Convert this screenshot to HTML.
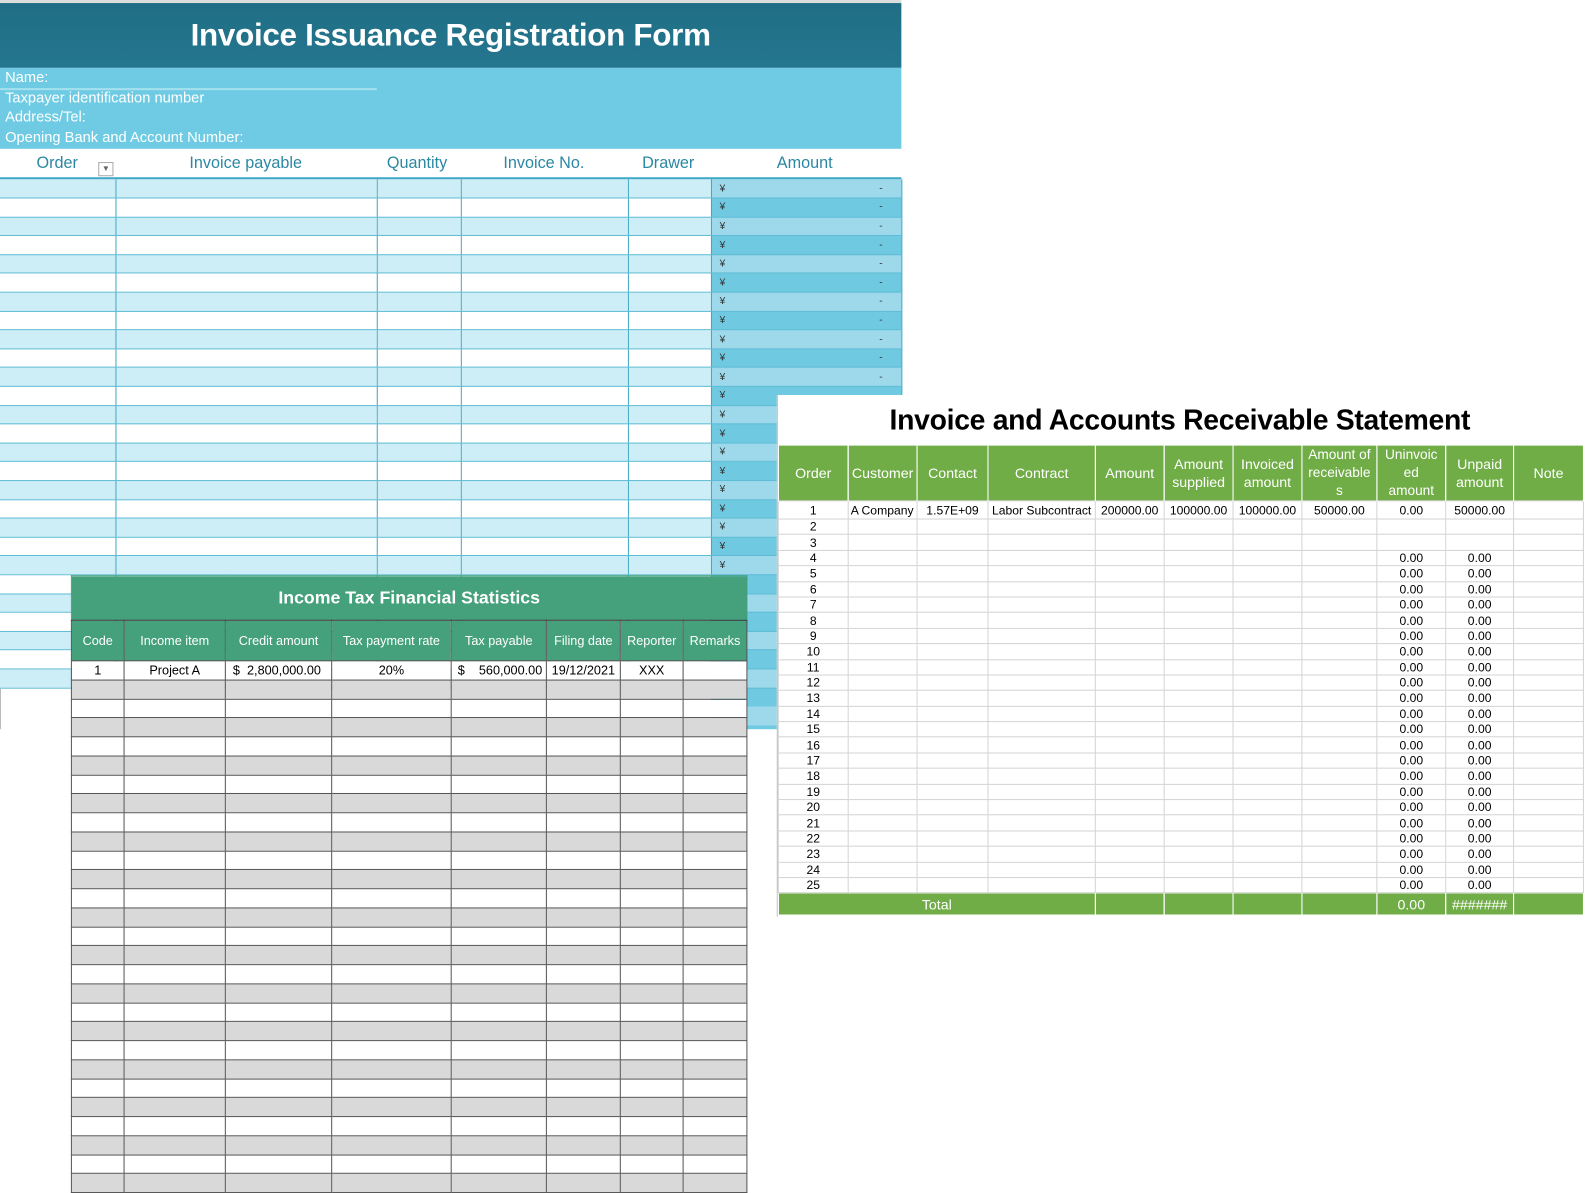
<!DOCTYPE html>
<html><head><meta charset="utf-8"><style>
*{margin:0;padding:0;box-sizing:border-box}
body{width:1588px;height:1191px;overflow:hidden;background:#fff;font-family:"Liberation Sans",sans-serif}
#w{position:absolute;left:0;top:0;width:1568px;height:1176px;transform:scale(1.01276);transform-origin:0 0}
.abs{position:absolute}
table{border-collapse:collapse;table-layout:fixed;position:absolute}
td{padding:0;overflow:hidden;white-space:nowrap}
#lt td{height:18.6px;border-right:1px solid #3fa8c6;border-bottom:1px solid #5ebcd5}
#lt tr:nth-child(odd) td{background:#cdeef6}
#lt tr:nth-child(odd) td.a{background:#9dd9ea}
#lt tr:nth-child(even) td.a{background:#6ec9e1}
#lt td.a{font-size:10px;color:#333;padding:0 18px 0 8px}
#lt td.a span{float:right}
#it td{border:1px solid #555;font-size:12.5px;text-align:center;height:18.75px;color:#000;background:#fff}
#it tr.g td{background:#d9d9d9}
#rt td{border:1px solid #d4d4d4;font-size:12px;text-align:center;height:15.4px;color:#000;line-height:14px;background:#fff}
#rt tr.h td{background:#70ad47;color:#fff;font-size:14px;white-space:normal;line-height:18px;height:53px;border:1px solid #fff;border-top:none;border-bottom:none}
#rt tr.h td.x{font-size:13.5px;line-height:18px;vertical-align:top;padding-top:0}
#rt tr.t td{background:#70ad47;color:#fff;font-size:14px;height:22px;line-height:20px;border:1px solid #fff}
</style></head><body><div id="w">
<div class="abs" style="left:0;top:0;width:890px;height:3px;background:#ddd"></div>
<div class="abs" style="left:0;top:3px;width:890px;height:64px;background:linear-gradient(#1f6e86,#24768e);color:#fff;font-weight:bold;font-size:31px;text-align:center;line-height:64px;letter-spacing:-0.3px">Invoice Issuance Registration Form</div>
<div class="abs" style="left:0;top:67px;width:890px;height:80px;background:#6ecbe3;color:#fff;font-size:14.5px;line-height:19.7px;padding:1px 5px">Name:<br>Taxpayer identification number<br>Address/Tel:<br>Opening Bank and Account Number:</div>
<div class="abs" style="left:0;top:87px;width:372px;height:2px;background:#a5e0ee"></div>
<div class="abs" style="left:0;top:147px;width:890px;height:30px;background:#fff;border-bottom:2px solid #3fa8c6;color:#2b88a3;font-size:16px;line-height:30px">
<span class="abs" style="left:36px">Order</span><span class="abs" style="left:97px;top:13px;width:15px;height:14px;border:1px solid #aaa;font-size:8px;line-height:12px;text-align:center;color:#666">▼</span>
<span class="abs" style="left:187px">Invoice payable</span><span class="abs" style="left:382px">Quantity</span><span class="abs" style="left:497px">Invoice No.</span><span class="abs" style="left:634px">Drawer</span><span class="abs" style="left:767px">Amount</span></div>
<div class="abs" style="left:702px;top:177px;width:188px;height:543px;background:repeating-linear-gradient(#9dd9ea 0 18.6px,#6ec9e1 18.6px 37.2px)"></div>
<table id="lt" style="left:0;top:177px;width:890px">
<colgroup><col style="width:114px"><col style="width:258px"><col style="width:83px"><col style="width:165px"><col style="width:82px"><col style="width:188px"></colgroup>
<tr><td></td><td></td><td></td><td></td><td></td><td class="a">¥<span>-</span></td></tr>
<tr><td></td><td></td><td></td><td></td><td></td><td class="a">¥<span>-</span></td></tr>
<tr><td></td><td></td><td></td><td></td><td></td><td class="a">¥<span>-</span></td></tr>
<tr><td></td><td></td><td></td><td></td><td></td><td class="a">¥<span>-</span></td></tr>
<tr><td></td><td></td><td></td><td></td><td></td><td class="a">¥<span>-</span></td></tr>
<tr><td></td><td></td><td></td><td></td><td></td><td class="a">¥<span>-</span></td></tr>
<tr><td></td><td></td><td></td><td></td><td></td><td class="a">¥<span>-</span></td></tr>
<tr><td></td><td></td><td></td><td></td><td></td><td class="a">¥<span>-</span></td></tr>
<tr><td></td><td></td><td></td><td></td><td></td><td class="a">¥<span>-</span></td></tr>
<tr><td></td><td></td><td></td><td></td><td></td><td class="a">¥<span>-</span></td></tr>
<tr><td></td><td></td><td></td><td></td><td></td><td class="a">¥<span>-</span></td></tr>
<tr><td></td><td></td><td></td><td></td><td></td><td class="a">¥</td></tr>
<tr><td></td><td></td><td></td><td></td><td></td><td class="a">¥</td></tr>
<tr><td></td><td></td><td></td><td></td><td></td><td class="a">¥</td></tr>
<tr><td></td><td></td><td></td><td></td><td></td><td class="a">¥</td></tr>
<tr><td></td><td></td><td></td><td></td><td></td><td class="a">¥</td></tr>
<tr><td></td><td></td><td></td><td></td><td></td><td class="a">¥</td></tr>
<tr><td></td><td></td><td></td><td></td><td></td><td class="a">¥</td></tr>
<tr><td></td><td></td><td></td><td></td><td></td><td class="a">¥</td></tr>
<tr><td></td><td></td><td></td><td></td><td></td><td class="a">¥</td></tr>
<tr><td></td><td></td><td></td><td></td><td></td><td class="a">¥</td></tr>
<tr><td></td><td></td><td></td><td></td><td></td><td class="a"></td></tr>
<tr><td></td><td></td><td></td><td></td><td></td><td class="a"></td></tr>
<tr><td></td><td></td><td></td><td></td><td></td><td class="a"></td></tr>
<tr><td></td><td></td><td></td><td></td><td></td><td class="a"></td></tr>
<tr><td></td><td></td><td></td><td></td><td></td><td class="a"></td></tr>
<tr><td></td><td></td><td></td><td></td><td></td><td class="a"></td></tr>
</table>
<div class="abs" style="left:0;top:680px;width:1px;height:40px;background:#bbb"></div>

<table id="it" style="left:70px;top:568px;width:667px">
<colgroup><col style="width:52px"><col style="width:100px"><col style="width:105px"><col style="width:118px"><col style="width:94px"><col style="width:73px"><col style="width:62px"><col style="width:63px"></colgroup>
<tr><td colspan="8" style="height:44px;background:#45a07c;color:#fff;font-weight:bold;font-size:17.5px;border-color:#45a07c #45a07c #333">Income Tax Financial Statistics</td></tr>
<tr><td style="height:40px;color:#fff;background:#45a07c">Code</td><td style="color:#fff;background:#45a07c">Income item</td><td style="color:#fff;background:#45a07c">Credit amount</td><td style="color:#fff;background:#45a07c">Tax payment rate</td><td style="color:#fff;background:#45a07c">Tax payable</td><td style="color:#fff;background:#45a07c">Filing date</td><td style="color:#fff;background:#45a07c">Reporter</td><td style="color:#fff;background:#45a07c">Remarks</td></tr>
<tr><td>1</td><td>Project A</td><td style="text-align:left;padding-left:7px">$&nbsp; 2,800,000.00</td><td>20%</td><td style="text-align:left;padding-left:6px">$&nbsp;&nbsp;&nbsp; 560,000.00</td><td>19/12/2021</td><td>XXX</td><td></td></tr>
<tr class="g"><td></td><td></td><td></td><td></td><td></td><td></td><td></td><td></td></tr>
<tr><td></td><td></td><td></td><td></td><td></td><td></td><td></td><td></td></tr>
<tr class="g"><td></td><td></td><td></td><td></td><td></td><td></td><td></td><td></td></tr>
<tr><td></td><td></td><td></td><td></td><td></td><td></td><td></td><td></td></tr>
<tr class="g"><td></td><td></td><td></td><td></td><td></td><td></td><td></td><td></td></tr>
<tr><td></td><td></td><td></td><td></td><td></td><td></td><td></td><td></td></tr>
<tr class="g"><td></td><td></td><td></td><td></td><td></td><td></td><td></td><td></td></tr>
<tr><td></td><td></td><td></td><td></td><td></td><td></td><td></td><td></td></tr>
<tr class="g"><td></td><td></td><td></td><td></td><td></td><td></td><td></td><td></td></tr>
<tr><td></td><td></td><td></td><td></td><td></td><td></td><td></td><td></td></tr>
<tr class="g"><td></td><td></td><td></td><td></td><td></td><td></td><td></td><td></td></tr>
<tr><td></td><td></td><td></td><td></td><td></td><td></td><td></td><td></td></tr>
<tr class="g"><td></td><td></td><td></td><td></td><td></td><td></td><td></td><td></td></tr>
<tr><td></td><td></td><td></td><td></td><td></td><td></td><td></td><td></td></tr>
<tr class="g"><td></td><td></td><td></td><td></td><td></td><td></td><td></td><td></td></tr>
<tr><td></td><td></td><td></td><td></td><td></td><td></td><td></td><td></td></tr>
<tr class="g"><td></td><td></td><td></td><td></td><td></td><td></td><td></td><td></td></tr>
<tr><td></td><td></td><td></td><td></td><td></td><td></td><td></td><td></td></tr>
<tr class="g"><td></td><td></td><td></td><td></td><td></td><td></td><td></td><td></td></tr>
<tr><td></td><td></td><td></td><td></td><td></td><td></td><td></td><td></td></tr>
<tr class="g"><td></td><td></td><td></td><td></td><td></td><td></td><td></td><td></td></tr>
<tr><td></td><td></td><td></td><td></td><td></td><td></td><td></td><td></td></tr>
<tr class="g"><td></td><td></td><td></td><td></td><td></td><td></td><td></td><td></td></tr>
<tr><td></td><td></td><td></td><td></td><td></td><td></td><td></td><td></td></tr>
<tr class="g"><td></td><td></td><td></td><td></td><td></td><td></td><td></td><td></td></tr>
<tr><td></td><td></td><td></td><td></td><td></td><td></td><td></td><td></td></tr>
<tr class="g"><td></td><td></td><td></td><td></td><td></td><td></td><td></td><td></td></tr>
</table>

<div class="abs" style="left:767px;top:390px;width:796px;height:515px;background:#fff;border-left:1px solid #bbb"></div>
<div class="abs" style="left:767px;top:390px;width:796px;height:50px;text-align:center;font-weight:bold;font-size:28px;line-height:50px;color:#000;letter-spacing:-0.3px">Invoice and Accounts Receivable Statement</div>
<table id="rt" style="left:768px;top:440px;width:795px">
<colgroup><col style="width:69px"><col style="width:68px"><col style="width:70px"><col style="width:106px"><col style="width:68px"><col style="width:68px"><col style="width:68px"><col style="width:74px"><col style="width:68px"><col style="width:67px"><col style="width:69px"></colgroup>
<tr class="h"><td>Order</td><td>Customer</td><td>Contact</td><td>Contract</td><td>Amount</td><td>Amount<br>supplied</td><td>Invoiced<br>amount</td><td class="x">Amount of<br>receivable<br>s</td><td class="x">Uninvoic<br>ed<br>amount</td><td>Unpaid<br>amount</td><td>Note</td></tr>
<tr><td style="height:18px">1</td><td style="text-align:left;padding-left:2px">A Company</td><td>1.57E+09</td><td>Labor Subcontract</td><td>200000.00</td><td>100000.00</td><td>100000.00</td><td>50000.00</td><td>0.00</td><td>50000.00</td><td></td></tr>
<tr><td>2</td><td></td><td></td><td></td><td></td><td></td><td></td><td></td><td></td><td></td><td></td></tr>
<tr><td>3</td><td></td><td></td><td></td><td></td><td></td><td></td><td></td><td></td><td></td><td></td></tr>
<tr><td>4</td><td></td><td></td><td></td><td></td><td></td><td></td><td></td><td>0.00</td><td>0.00</td><td></td></tr>
<tr><td>5</td><td></td><td></td><td></td><td></td><td></td><td></td><td></td><td>0.00</td><td>0.00</td><td></td></tr>
<tr><td>6</td><td></td><td></td><td></td><td></td><td></td><td></td><td></td><td>0.00</td><td>0.00</td><td></td></tr>
<tr><td>7</td><td></td><td></td><td></td><td></td><td></td><td></td><td></td><td>0.00</td><td>0.00</td><td></td></tr>
<tr><td>8</td><td></td><td></td><td></td><td></td><td></td><td></td><td></td><td>0.00</td><td>0.00</td><td></td></tr>
<tr><td>9</td><td></td><td></td><td></td><td></td><td></td><td></td><td></td><td>0.00</td><td>0.00</td><td></td></tr>
<tr><td>10</td><td></td><td></td><td></td><td></td><td></td><td></td><td></td><td>0.00</td><td>0.00</td><td></td></tr>
<tr><td>11</td><td></td><td></td><td></td><td></td><td></td><td></td><td></td><td>0.00</td><td>0.00</td><td></td></tr>
<tr><td>12</td><td></td><td></td><td></td><td></td><td></td><td></td><td></td><td>0.00</td><td>0.00</td><td></td></tr>
<tr><td>13</td><td></td><td></td><td></td><td></td><td></td><td></td><td></td><td>0.00</td><td>0.00</td><td></td></tr>
<tr><td>14</td><td></td><td></td><td></td><td></td><td></td><td></td><td></td><td>0.00</td><td>0.00</td><td></td></tr>
<tr><td>15</td><td></td><td></td><td></td><td></td><td></td><td></td><td></td><td>0.00</td><td>0.00</td><td></td></tr>
<tr><td>16</td><td></td><td></td><td></td><td></td><td></td><td></td><td></td><td>0.00</td><td>0.00</td><td></td></tr>
<tr><td>17</td><td></td><td></td><td></td><td></td><td></td><td></td><td></td><td>0.00</td><td>0.00</td><td></td></tr>
<tr><td>18</td><td></td><td></td><td></td><td></td><td></td><td></td><td></td><td>0.00</td><td>0.00</td><td></td></tr>
<tr><td>19</td><td></td><td></td><td></td><td></td><td></td><td></td><td></td><td>0.00</td><td>0.00</td><td></td></tr>
<tr><td>20</td><td></td><td></td><td></td><td></td><td></td><td></td><td></td><td>0.00</td><td>0.00</td><td></td></tr>
<tr><td>21</td><td></td><td></td><td></td><td></td><td></td><td></td><td></td><td>0.00</td><td>0.00</td><td></td></tr>
<tr><td>22</td><td></td><td></td><td></td><td></td><td></td><td></td><td></td><td>0.00</td><td>0.00</td><td></td></tr>
<tr><td>23</td><td></td><td></td><td></td><td></td><td></td><td></td><td></td><td>0.00</td><td>0.00</td><td></td></tr>
<tr><td>24</td><td></td><td></td><td></td><td></td><td></td><td></td><td></td><td>0.00</td><td>0.00</td><td></td></tr>
<tr><td>25</td><td></td><td></td><td></td><td></td><td></td><td></td><td></td><td>0.00</td><td>0.00</td><td></td></tr>
<tr class="t"><td colspan="4">Total</td><td></td><td></td><td></td><td></td><td>0.00</td><td>#######</td><td></td></tr>
</table>
</div></body></html>
